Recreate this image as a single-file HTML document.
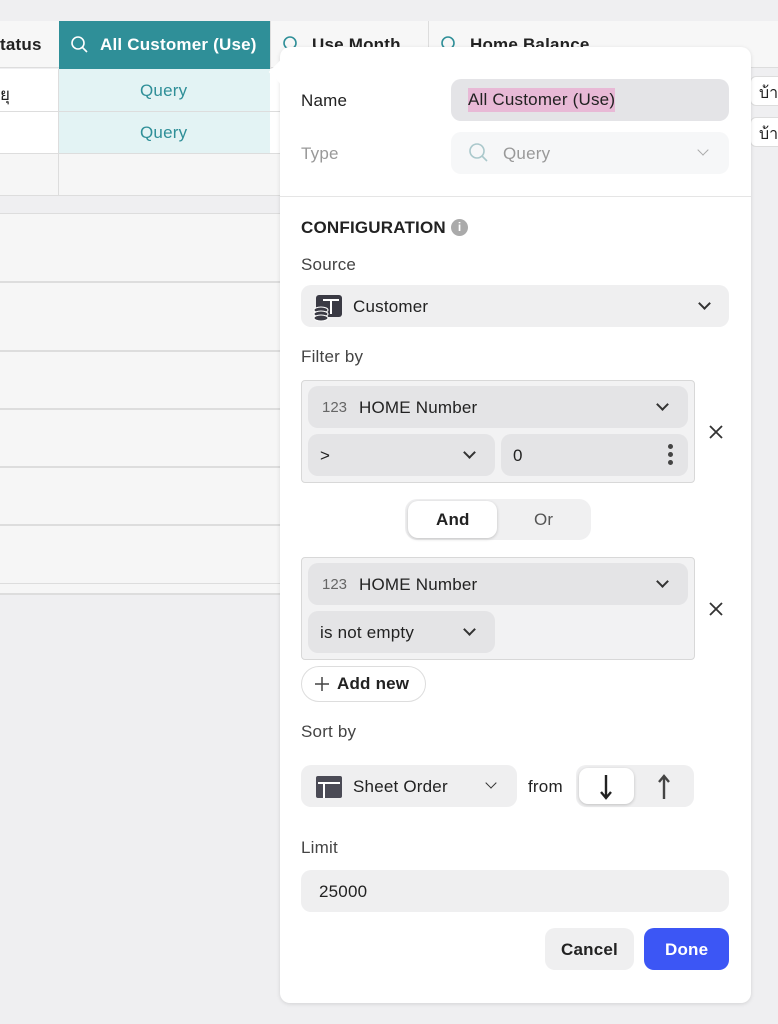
<!DOCTYPE html>
<html><head><meta charset="utf-8"><style>
*{box-sizing:border-box;margin:0;padding:0}
body{width:778px;height:1024px;background:#efeff1;font-family:"Liberation Sans","Noto Sans CJK SC",sans-serif;position:relative;overflow:hidden;color:#222}
.a{position:absolute}
.t{font-size:17px;letter-spacing:.2px}
.field{position:absolute;background:#efeff0;border-radius:10px}
.chev{position:absolute;width:9px;height:9px;border-right:2px solid #333;border-bottom:2px solid #333;transform:rotate(45deg)}
.lbl{position:absolute;font-size:17px;color:#444;letter-spacing:.2px}
</style></head><body>
<div class="a" style="left:0;top:21px;width:778px;height:47px;background:#f7f7f7;border-bottom:1px solid #ddd"></div>
<div class="a t" style="left:0;top:35px;font-weight:bold">tatus</div>
<div class="a" style="left:59px;top:21px;width:211px;height:48px;background:#2f8f98"></div>
<svg class="a" style="left:70px;top:35px" width="20" height="20" viewBox="0 0 20 20"><circle cx="8" cy="8" r="6" fill="none" stroke="#fff" stroke-width="1.6"/><path d="M12.5 12.5L17 17" stroke="#fff" stroke-width="1.6"/></svg>
<div class="a t" style="left:100px;top:35px;color:#fff;font-weight:bold">All Customer (Use)</div>
<div class="a" style="left:270px;top:21px;width:1px;height:175px;background:#ddd"></div>
<div class="a" style="left:428px;top:21px;width:1px;height:30px;background:#ddd"></div>
<svg class="a" style="left:282px;top:35px" width="20" height="20"><circle cx="8" cy="8" r="6" fill="none" stroke="#2f8f98" stroke-width="1.6"/></svg>
<div class="a t" style="left:312px;top:35px;font-weight:bold">Use Month</div>
<svg class="a" style="left:440px;top:35px" width="20" height="20"><circle cx="8" cy="8" r="6" fill="none" stroke="#2f8f98" stroke-width="1.6"/></svg>
<div class="a t" style="left:470px;top:35px;font-weight:bold">Home Balance</div>
<div class="a" style="left:0;top:69px;width:280px;height:85px;background:#fff"></div>
<div class="a" style="left:59px;top:69px;width:211px;height:85px;background:#e3f3f4"></div>
<div class="a" style="left:0;top:111px;width:280px;height:1px;background:#ddd"></div>
<div class="a" style="left:0;top:153px;width:280px;height:1px;background:#ddd"></div>
<div class="a" style="left:0;top:154px;width:280px;height:42px;background:#f6f6f6;border-bottom:1px solid #ddd"></div>
<div class="a" style="left:58px;top:69px;width:1px;height:127px;background:#ddd"></div>
<div class="a t" style="left:0;top:81px">ยุ</div>
<div class="a t" style="left:140px;top:81px;color:#2f8f98">Query</div>
<div class="a t" style="left:140px;top:123px;color:#2f8f98">Query</div>
<div class="a" style="left:0;top:213px;width:280px;height:370px;background:#f6f6f6;border-top:1px solid #ddd"></div>
<div class="a" style="left:0;top:281px;width:280px;height:2px;background:#ddd"></div>
<div class="a" style="left:0;top:350px;width:280px;height:2px;background:#ddd"></div>
<div class="a" style="left:0;top:408px;width:280px;height:2px;background:#ddd"></div>
<div class="a" style="left:0;top:466px;width:280px;height:2px;background:#ddd"></div>
<div class="a" style="left:0;top:524px;width:280px;height:2px;background:#ddd"></div>
<div class="a" style="left:0;top:583px;width:280px;height:12px;background:#f6f6f6;border-top:1px solid #ddd;border-bottom:2px solid #ddd"></div>
<div class="a" style="left:750px;top:76px;width:40px;height:30px;background:#fff;border:1px solid #ddd;border-radius:6px;padding:4px 8px;font-size:16px">บ้า</div>
<div class="a" style="left:750px;top:117px;width:40px;height:30px;background:#fff;border:1px solid #ddd;border-radius:6px;padding:4px 8px;font-size:16px">บ้า</div>
<div class="a" style="left:280px;top:47px;width:471px;height:956px;background:#fff;border-radius:10px;box-shadow:0 1px 4px rgba(0,0,0,.12)"></div>
<div class="a" style="left:272px;top:64px;width:16px;height:16px;background:#fff;transform:rotate(45deg)"></div>
<div class="lbl" style="left:301px;top:91px;color:#222">Name</div>
<div class="field" style="left:451px;top:79px;width:278px;height:42px;background:#e4e4e7"></div>
<div class="a t" style="left:468px;top:88px;background:#e8b9d6;padding:2px 0">All Customer (Use)</div>
<div class="lbl" style="left:301px;top:144px;color:#999">Type</div>
<div class="field" style="left:451px;top:132px;width:278px;height:42px;background:#f6f7f8"></div>
<svg class="a" style="left:468px;top:142px" width="22" height="22"><circle cx="9" cy="9" r="7" fill="none" stroke="#aac8cb" stroke-width="1.6"/><path d="M14 14L19 19" stroke="#aac8cb" stroke-width="1.6"/></svg>
<div class="a t" style="left:503px;top:144px;color:#999">Query</div>
<div class="chev" style="left:699px;top:146px;border-color:#aaa;width:8px;height:8px;border-width:1.5px"></div>
<div class="a" style="left:280px;top:196px;width:471px;height:1px;background:#e5e5e5"></div>
<div class="a t" style="left:301px;top:218px;font-weight:bold;color:#222">CONFIGURATION</div>
<div class="a" style="left:451px;top:219px;width:17px;height:17px;border-radius:50%;background:#aaa;color:#fff;font-size:12px;text-align:center;line-height:17px;font-weight:bold">i</div>
<div class="lbl" style="left:301px;top:255px">Source</div>
<div class="field" style="left:301px;top:285px;width:428px;height:42px"></div>
<svg class="a" style="left:313px;top:294px" width="30" height="28" viewBox="0 0 30 28"><rect x="3" y="1" width="26" height="22" rx="3" fill="#3a3a44"/><path d="M10 6h16M18 6v14" stroke="#fff" stroke-width="2"/><ellipse cx="8" cy="16" rx="7" ry="3" fill="#3a3a44" stroke="#fff" stroke-width="1"/><ellipse cx="8" cy="20" rx="7" ry="3" fill="#3a3a44" stroke="#fff" stroke-width="1"/><ellipse cx="8" cy="24" rx="7" ry="3" fill="#3a3a44" stroke="#fff" stroke-width="1"/></svg>
<div class="a t" style="left:353px;top:297px">Customer</div>
<div class="chev" style="left:700px;top:299px"></div>
<div class="lbl" style="left:301px;top:347px">Filter by</div>
<div class="a" style="left:301px;top:380px;width:394px;height:103px;background:#f2f2f3;border:1px solid #d8d8d8;border-radius:4px"></div>
<div class="field" style="left:308px;top:386px;width:380px;height:42px;background:#e4e4e6"></div>
<div class="a" style="left:322px;top:399px;font-size:15px;color:#666">123</div>
<div class="a t" style="left:359px;top:398px">HOME Number</div>
<div class="chev" style="left:658px;top:400px"></div>
<div class="field" style="left:308px;top:434px;width:187px;height:42px;background:#e4e4e6"></div>
<div class="a t" style="left:320px;top:446px">&gt;</div>
<div class="chev" style="left:465px;top:448px"></div>
<div class="field" style="left:501px;top:434px;width:187px;height:42px;background:#e4e4e6"></div>
<div class="a t" style="left:513px;top:446px">0</div>
<div class="a" style="left:668px;top:444px;width:5px;height:5px;border-radius:50%;background:#444;box-shadow:0 8px 0 #444,0 16px 0 #444"></div>
<svg class="a" style="left:708px;top:424px" width="16" height="16"><path d="M2 2L14 14M14 2L2 14" stroke="#333" stroke-width="1.8"/></svg>
<div class="field" style="left:405px;top:499px;width:186px;height:41px;background:#f0f0f1;border-radius:12px"></div>
<div class="a" style="left:408px;top:501px;width:89px;height:37px;background:#fff;border-radius:10px;box-shadow:0 1px 3px rgba(0,0,0,.2)"></div>
<div class="a t" style="left:436px;top:510px;font-weight:bold">And</div>
<div class="a t" style="left:534px;top:510px;color:#555">Or</div>
<div class="a" style="left:301px;top:557px;width:394px;height:103px;background:#f2f2f3;border:1px solid #d8d8d8;border-radius:4px"></div>
<div class="field" style="left:308px;top:563px;width:380px;height:42px;background:#e4e4e6"></div>
<div class="a" style="left:322px;top:576px;font-size:15px;color:#666">123</div>
<div class="a t" style="left:359px;top:575px">HOME Number</div>
<div class="chev" style="left:658px;top:577px"></div>
<div class="field" style="left:308px;top:611px;width:187px;height:42px;background:#e4e4e6"></div>
<div class="a t" style="left:320px;top:623px">is not empty</div>
<div class="chev" style="left:465px;top:625px"></div>
<svg class="a" style="left:708px;top:601px" width="16" height="16"><path d="M2 2L14 14M14 2L2 14" stroke="#333" stroke-width="1.8"/></svg>
<div class="a" style="left:301px;top:666px;width:125px;height:36px;border:1px solid #ddd;border-radius:18px;background:#fff"></div>
<svg class="a" style="left:314px;top:676px" width="16" height="16"><path d="M8 1V15M1 8H15" stroke="#444" stroke-width="1.5"/></svg>
<div class="a t" style="left:337px;top:674px;font-weight:bold">Add new</div>
<div class="lbl" style="left:301px;top:722px">Sort by</div>
<div class="field" style="left:301px;top:765px;width:216px;height:42px"></div>
<svg class="a" style="left:315px;top:775px" width="28" height="24"><rect x="1" y="1" width="26" height="22" rx="2" fill="#4a4a55"/><path d="M3 8H25M9 8V23" stroke="#fff" stroke-width="2"/></svg>
<div class="a t" style="left:353px;top:777px">Sheet Order</div>
<div class="chev" style="left:487px;top:779px;width:8px;height:8px;border-width:1.5px"></div>
<div class="a t" style="left:528px;top:777px">from</div>
<div class="field" style="left:576px;top:765px;width:118px;height:42px"></div>
<div class="a" style="left:579px;top:768px;width:55px;height:36px;background:#fff;border-radius:9px;box-shadow:0 1px 3px rgba(0,0,0,.2)"></div>
<svg class="a" style="left:596px;top:772px" width="20" height="30"><path d="M10 3V25M5 20L10 26L15 20" stroke="#222" stroke-width="2.4" fill="none"/></svg>
<svg class="a" style="left:654px;top:772px" width="20" height="30"><path d="M10 27V5M5 10L10 4L15 10" stroke="#444" stroke-width="2.4" fill="none"/></svg>
<div class="lbl" style="left:301px;top:838px">Limit</div>
<div class="field" style="left:301px;top:870px;width:428px;height:42px"></div>
<div class="a t" style="left:319px;top:882px">25000</div>
<div class="field" style="left:545px;top:928px;width:89px;height:42px"></div>
<div class="a t" style="left:561px;top:940px;font-weight:bold">Cancel</div>
<div class="field" style="left:644px;top:928px;width:85px;height:42px;background:#3c56f5"></div>
<div class="a t" style="left:665px;top:940px;font-weight:bold;color:#fff">Done</div>
</body></html>
